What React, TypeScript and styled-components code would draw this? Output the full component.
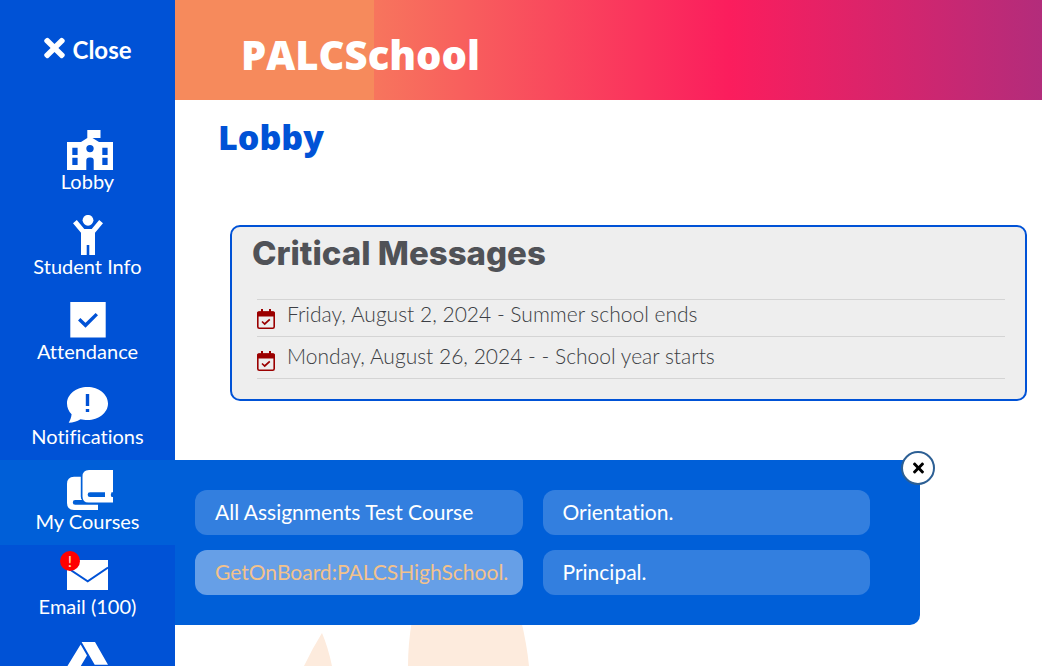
import React from "react";
import styled, { createGlobalStyle } from "styled-components";
import { FaTimes } from "react-icons/fa";

const GlobalStyle = createGlobalStyle`
  *, *::before, *::after { box-sizing: border-box; }
  body {
    margin: 0;
    background: #fff;
    color: #3c3e44;
    font-family: Lato, "Open Sans", sans-serif;
    font-size: 21px;
    font-variant-ligatures: none;
  }
`;

const BLUE = "#0052d6";
const BLUE_ACTIVE = "#005fd8";

const Shell = styled.div`
  display: grid;
  grid-template-columns: 175px minmax(0, 1fr);
  grid-template-rows: minmax(0, 1fr);
  height: 100vh;
  overflow: hidden;
`;

const Sidebar = styled.nav`
  position: relative;
  z-index: 1;
  background: ${BLUE};
`;

const CloseMenu = styled.button`
  display: flex;
  align-items: center;
  justify-content: center;
  gap: 8px;
  width: 100%;
  height: 100px;
  margin-bottom: 20px;
  padding: 0;
  border: 0;
  background: none;
  color: #fff;
  font: 700 24px/30px Lato, sans-serif;
  cursor: pointer;

  svg {
    width: 21px;
    height: 30px;
    margin-bottom: 5px;
  }
`;

const NavList = styled.ul`
  margin: 0;
  padding: 0;
  list-style: none;
`;

const NavItem = styled.li<{ $active?: boolean }>`
  position: relative;
  background: ${(p) => (p.$active ? BLUE_ACTIVE : "transparent")};
`;

const NavLink = styled.a`
  display: flex;
  flex-direction: column;
  align-items: center;
  height: 85px;
  padding: 10px 0;
  color: #fff;
  font-size: 20px;
  line-height: 22px;
  text-decoration: none;
  white-space: nowrap;

  svg {
    display: block;
    flex: none;
  }
`;

const Alert = styled.span`
  position: absolute;
  top: 6px;
  left: 60px;
  width: 20px;
  height: 20px;
  border-radius: 50%;
  background: #f00;
  color: #ffe3c0;
  font-size: 16px;
  line-height: 19px;
  text-align: center;
`;

const Flyout = styled.div`
  position: absolute;
  top: 0;
  left: 100%;
  width: 745px;
  padding: 30px 50px 30px 20px;
  border-radius: 0 0 10px 0;
  background: ${BLUE_ACTIVE};
`;

const CourseGrid = styled.div`
  display: grid;
  grid-template-columns: repeat(2, minmax(0, 1fr));
  gap: 15px 20px;
`;

const Course = styled.a<{ $current?: boolean }>`
  height: 45px;
  padding: 0 20px;
  border-radius: 12px;
  background: rgba(255, 255, 255, ${(p) => (p.$current ? 0.4 : 0.2)});
  color: ${(p) => (p.$current ? "#f3c28c" : "#fff")};
  line-height: 43px;
  text-decoration: none;
  white-space: nowrap;
`;

const Dismiss = styled.button`
  position: absolute;
  top: -9px;
  right: -15px;
  display: flex;
  align-items: center;
  justify-content: center;
  width: 34px;
  height: 34px;
  padding: 0;
  border: 2px solid #2c5f94;
  border-radius: 50%;
  background: #fff;
  color: #000;
  cursor: pointer;

  svg {
    width: 11px;
    height: 16px;
  }
`;

const Main = styled.main`
  display: flex;
  flex-direction: column;
  min-width: 0;
`;

const Banner = styled.header`
  display: flex;
  align-items: center;
  flex: none;
  height: 100px;
  padding: 10px 66px 0;
  background: linear-gradient(
    to right,
    #f68a5c 199px,
    #f7755d 199px,
    #fb1d5d 64%,
    #b32c7b 100%
  );
`;

const SchoolName = styled.h1`
  margin: 0;
  color: #fff;
  font-family: "Open Sans", sans-serif;
  font-size: 40px;
  font-weight: 800;
  line-height: 50px;
`;

const PageTitle = styled.h2`
  margin: 0 0 50px;
  padding-left: 43px;
  color: ${BLUE};
  font-family: "Open Sans", sans-serif;
  font-size: 34px;
  font-weight: 800;
  line-height: 75px;
`;

const Card = styled.section`
  margin: 0 15px 0 55px;
  padding: 0 20px 20px;
  border: 2px solid ${BLUE};
  border-radius: 10px;
  background: #eee;
`;

const CardTitle = styled.h3`
  margin: 0 0 20px;
  color: #505257;
  font-family: Inter, sans-serif;
  font-size: 33px;
  font-weight: 800;
  line-height: 52px;
`;

const Messages = styled.ul`
  margin: 0 0 0 5px;
  padding: 0;
  border-top: 1px solid #d4d4d4;
  list-style: none;
`;

const Message = styled.li`
  display: flex;
  gap: 12px;
  padding: 5px 0 9px;
  border-bottom: 1px solid #d4d4d4;
  font-weight: 300;
  line-height: 27px;

  &:first-child {
    padding-top: 0;
  }

  svg {
    flex: none;
    margin-top: 9px;
    margin-bottom: -2px;
  }
`;

const Petals = styled.svg`
  display: block;
  flex: none;
  margin: auto 0 0 125px;
`;

const icons: Record<string, React.ReactNode> = {
  lobby: (
    <svg width="50" height="40" viewBox="-4 0 50 40" fill="#fff">
      <path
        fillRule="evenodd"
        d="M20.3 0H33.5V8H25.5L32 12H46V40H26.7V30.5a3 3 0 0 0-3-3h-1.4a3 3 0 0 0-3 3V40H0V12H14L20.3 8ZM5.3 17.8v7.2h5.3v-7.2ZM5.3 27.8V35h5.3v-7.2ZM35.3 17.8v7.2h5.3v-7.2ZM35.3 27.8V35h5.3v-7.2ZM23 14.9a3.7 3.7 0 1 0 0 7.4a3.7 3.7 0 0 0 0-7.4Z"
      />
    </svg>
  ),
  student: (
    <svg width="30" height="40" viewBox="0 0 30 40" fill="#fff">
      <circle cx="15" cy="5.3" r="5.4" />
      <path d="M3.8 5 11.3 14H18.7L26.2 5 30 8.3 22 17.7V40H16.3V30H13.7V40H8V17.7L0 8.3Z" />
    </svg>
  ),
  attendance: (
    <svg width="36" height="40" viewBox="0 0 36 40">
      <path d="M0.3 2H35.7V37.5H0.3Z" fill="#fff" />
      <path d="M9.2 19.3 15.5 25.3 26.8 14.1" fill="none" stroke={BLUE} strokeWidth="3.4" />
    </svg>
  ),
  notifications: (
    <svg width="41" height="40" viewBox="0 0 41 40">
      <path
        d="M20.5 2C31.8 2 41 9.4 41 18.5S31.8 35 20.5 35C18 35 15.5 34.7 13.5 34.2C10 36.3 6 37.5 1.7 37.8C3.2 35.4 4.3 32.5 4.6 29.3C1.7 26.4 0 22.5 0 18.5C0 9.4 9.2 2 20.5 2Z"
        fill="#fff"
      />
      <path d="M18.8 9H22.2V21H18.8ZM18.8 24H22.2V27H18.8Z" fill={BLUE} />
    </svg>
  ),
  courses: (
    <svg width="50" height="40" viewBox="-4 0 50 40" fill="#fff">
      <path
        fillRule="evenodd"
        d="M22 0H46V22.3H44.5Q43.2 24.6 44.5 27H46V32.5H21.5Q15.5 32.5 15.5 26.5V6.5Q15.5 0 22 0ZM23 22.3a2.3 2.3 0 0 0 0 4.7H38V22.3Z"
      />
      <path d="M7 6.8H13.8V26.5Q13.8 29 15.2 30H8.2a2.4 2.4 0 0 0 0 4.8H31V40H7Q0 40 0 33V14Q0 7 7 6.8Z" />
    </svg>
  ),
  email: (
    <svg width="41" height="40" viewBox="0 0 41 40">
      <path d="M0 5H41V35H0Z" fill="#fff" />
      <path d="M0 12.5 20.7 26.4 41 12.5" fill="none" stroke={BLUE} strokeWidth="1.9" />
    </svg>
  ),
  drive: (
    <svg width="46" height="40" viewBox="0 0 46 40" fill="#fff">
      <path d="M16.6 2H30L43 24.7H29.7ZM15.6 4.5 22 15.5 7.5 40 0 30ZM17 28H45L38.5 40H10Z" />
    </svg>
  ),
};

const CalendarCheck = () => (
  <svg width="18" height="20" viewBox="0 0 18 20" aria-hidden="true">
    <rect x="0.8" y="3" width="16.4" height="16.2" rx="1.5" fill="none" stroke="#9b0000" strokeWidth="1.6" />
    <path d="M0 7.5V4Q0 2.5 1.5 2.5H4V0H6V2.5H12V0H14V2.5H16.5Q18 2.5 18 4V7.5Z" fill="#9b0000" />
    <path d="M5 12.5 7.7 15 12.8 10.3" fill="none" stroke="#9b0000" strokeWidth="1.7" />
  </svg>
);

const navigation = [
  { icon: "lobby", label: "Lobby" },
  { icon: "student", label: "Student Info" },
  { icon: "attendance", label: "Attendance" },
  { icon: "notifications", label: "Notifications" },
  { icon: "courses", label: "My Courses" },
  { icon: "email", label: "Email (100)" },
  { icon: "drive", label: "" },
];

const courses = [
  "All Assignments Test Course",
  "Orientation.",
  "GetOnBoard:PALCSHighSchool.",
  "Principal.",
];

const messages = [
  "Friday, August 2, 2024 - Summer school ends",
  "Monday, August 26, 2024 - - School year starts",
];

const CourseMenu = () => (
  <Flyout>
    <CourseGrid>
      {courses.map((name, i) => (
        <Course key={name} href="#course" $current={i === 2}>
          {name}
        </Course>
      ))}
    </CourseGrid>
    <Dismiss type="button" aria-label="Close courses">
      <FaTimes />
    </Dismiss>
  </Flyout>
);

export default function App() {
  return (
    <>
      <GlobalStyle />
      <Shell>
        <Sidebar>
          <CloseMenu type="button">
            <FaTimes />
            Close
          </CloseMenu>
          <NavList>
            {navigation.map(({ icon, label }) => (
              <NavItem key={icon} $active={icon === "courses"}>
                <NavLink href={`#${icon}`} aria-label={label || "Drive"}>
                  {icons[icon]}
                  {label}
                </NavLink>
                {icon === "email" && <Alert>!</Alert>}
                {icon === "courses" && <CourseMenu />}
              </NavItem>
            ))}
          </NavList>
        </Sidebar>
        <Main>
          <Banner>
            <SchoolName>PALCSchool</SchoolName>
          </Banner>
          <PageTitle>Lobby</PageTitle>
          <Card>
            <CardTitle>Critical Messages</CardTitle>
            <Messages>
              {messages.map((text) => (
                <Message key={text}>
                  <CalendarCheck />
                  {text}
                </Message>
              ))}
            </Messages>
          </Card>
          <Petals width="240" height="46" viewBox="0 0 240 46" fill="#fdebdd" aria-hidden="true">
            <path d="M22 13Q12 29 4 46H32Q28 27 22 13ZM112 0Q108 24 108 46H229Q227 25 221 0Z" />
          </Petals>
        </Main>
      </Shell>
    </>
  );
}
